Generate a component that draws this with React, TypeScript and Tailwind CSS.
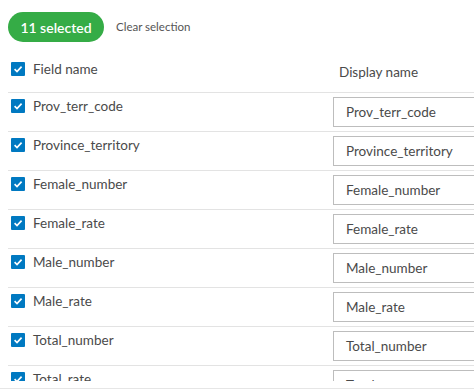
import React from 'react'

const fields = [
  'Prov_terr_code',
  'Province_territory',
  'Female_number',
  'Female_rate',
  'Male_number',
  'Male_rate',
  'Total_number',
  'Total_rate',
]

function Check() {
  return (
    <span className="w-[14px] h-[14px] shrink-0 bg-[#0079c1] rounded-[1px] flex items-center justify-center">
      <svg width="10" height="10" viewBox="0 0 10 10" fill="none">
        <path d="M1.6 5.2 L4 7.5 L8.6 2.6" stroke="white" strokeWidth="1.7" />
      </svg>
    </span>
  )
}

export default function App() {
  return (
    <div className="w-[474px] h-[392px] bg-white overflow-hidden text-[#4a4a4a] font-['Lato',sans-serif]">
      <div className="h-[381px] overflow-hidden">
        {/* Selection bar */}
        <div className="flex items-center pl-[8px] pt-[12px]">
          <span className="h-[30px] w-[96px] justify-center rounded-full bg-[#35ac46] text-white text-[14px] font-semibold flex items-center">
            11 selected
          </span>
          <span className="ml-[12px] text-[11.5px] text-[#555]">Clear selection</span>
        </div>

        {/* Header */}
        <div className="h-[50px] flex ml-[8px]">
          <div className="flex-1 flex items-start gap-[8px] pl-[3px] pt-[20px]">
            <Check />
            <span className="text-[13.5px] leading-[14px]">Field name</span>
          </div>
          <div className="w-[141px] pt-[23px] pl-[6px] text-[13.5px] leading-[14px]">Display name</div>
        </div>

        {/* Rows */}
        {fields.map((f) => (
          <div key={f} className="h-[39px] flex ml-[8px] border-t border-[#e3e3e3]">
            <div className="flex-1 flex items-start gap-[8px] pl-[3px] pt-[6px]">
              <Check />
              <span className="text-[13.5px] leading-[14px]">{f}</span>
            </div>
            <div className="w-[141px] pt-[4px]">
              <div className="w-[150px] h-[30px] border border-[#bdbdbd] flex items-center pl-[12px] text-[13.5px]">
                {f}
              </div>
            </div>
          </div>
        ))}
      </div>
      <div className="mt-[7px] border-t border-[#e6e6e6]" />
    </div>
  )
}
